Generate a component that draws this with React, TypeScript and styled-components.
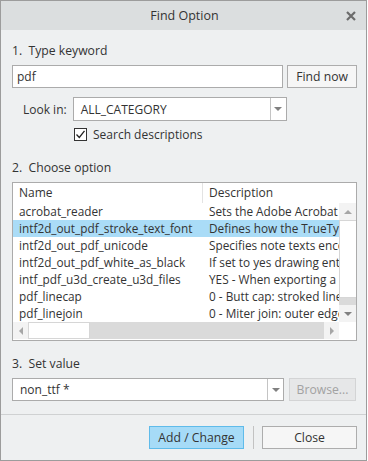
import { createGlobalStyle } from "styled-components";
import styled from "styled-components";

const GlobalStyle = createGlobalStyle`
  html, body {
    margin: 0;
    padding: 0;
    background: #ffffff;
  }
  body {
    font-family: "Open Sans", "Noto Sans", Arial, sans-serif;
    font-size: 11.8px;
    color: #333;
  }
`;

const options = [
  { name: "acrobat_reader", desc: "Sets the Adobe Acrobat Reader" },
  { name: "intf2d_out_pdf_stroke_text_font", desc: "Defines how the TrueType fonts" },
  { name: "intf2d_out_pdf_unicode", desc: "Specifies note texts encoding" },
  { name: "intf2d_out_pdf_white_as_black", desc: "If set to yes drawing entities" },
  { name: "intf_pdf_u3d_create_u3d_files", desc: "YES - When exporting a Creo" },
  { name: "pdf_linecap", desc: "0 - Butt cap: stroked lines" },
  { name: "pdf_linejoin", desc: "0 - Miter join: outer edges" },
];

export default function App() {
  return (
    <>
      <GlobalStyle />
      <Window>
        <TitleBar>
          <Title>Find Option</Title>
          <CloseIcon viewBox="0 0 10 10">
            <path d="M1 1 L9 9 M9 1 L1 9" stroke="#6b6b6b" strokeWidth="2.2" />
          </CloseIcon>
        </TitleBar>
        <Body>
          <StepLabel>1.&nbsp;&nbsp;Type keyword</StepLabel>
          <InputRow>
            <TextBox>pdf</TextBox>
            <Button width={70}>Find now</Button>
          </InputRow>
          <LookRow>
            <FieldLabel>Look in:</FieldLabel>
            <Combo width={214} height={24}>
              <ComboText>ALL_CATEGORY</ComboText>
              <ComboArrow>
                <Tri dir="down" />
              </ComboArrow>
            </Combo>
          </LookRow>
          <CheckRow>
            <CheckBox>
              <svg width="11" height="11" viewBox="0 0 11 11">
                <path d="M1.5 5.5 L4.3 8.5 L9.5 1.8" stroke="#222" strokeWidth="1.3" fill="none" />
              </svg>
            </CheckBox>
            <span>Search descriptions</span>
          </CheckRow>

          <StepLabel top={18}>2.&nbsp;&nbsp;Choose option</StepLabel>
          <ListBox>
            <HeaderRow>
              <HeaderCell>Name</HeaderCell>
              <HeaderCell divider>Description</HeaderCell>
            </HeaderRow>
            <ListMiddle>
              <Rows>
                {options.map((o, i) => (
                  <Row key={o.name} selected={i === 1}>
                    <NameCell>{o.name}</NameCell>
                    <DescCell>{o.desc}</DescCell>
                  </Row>
                ))}
              </Rows>
              <VScroll>
                <ArrowCell>
                  <Tri dir="up" />
                </ArrowCell>
                <VThumb />
                <VTrack />
                <ArrowCell>
                  <Tri dir="down" />
                </ArrowCell>
              </VScroll>
            </ListMiddle>
            <HScrollRow>
              <HScroll>
                <HArrowCell>
                  <Tri dir="left" />
                </HArrowCell>
                <HThumb />
                <HTrack />
                <HArrowCell>
                  <Tri dir="right" />
                </HArrowCell>
              </HScroll>
              <Corner />
            </HScrollRow>
          </ListBox>

          <StepLabel top={15}>3.&nbsp;&nbsp;Set value</StepLabel>
          <ValueRow>
            <Combo width={272} height={23}>
              <ComboText>non_ttf *</ComboText>
              <ComboArrow>
                <Tri dir="down" />
              </ComboArrow>
            </Combo>
            <Button width={67} disabled>
              Browse...
            </Button>
          </ValueRow>
        </Body>
        <Footer>
          <Button width={95} primary>
            Add / Change
          </Button>
          <FooterDivider />
          <Button width={95}>Close</Button>
        </Footer>
      </Window>
    </>
  );
}

const Window = styled.div`
  width: 367px;
  height: 461px;
  box-sizing: border-box;
  border: 1px solid #9c9c9c;
  background: #eef0f1;
  display: flex;
  flex-direction: column;
`;

const TitleBar = styled.div`
  height: 29px;
  flex: none;
  background: #dbdedf;
  display: flex;
  align-items: center;
  justify-content: center;
  position: relative;
`;

const Title = styled.div`
  font-size: 12.5px;
  color: #333;
  margin-left: 2px;
`;

const CloseIcon = styled.svg`
  position: absolute;
  right: 10px;
  top: 10px;
  width: 10px;
  height: 10px;
`;

const Body = styled.div`
  padding: 13px 9px 0 11px;
  display: flex;
  flex-direction: column;
  flex: 1;
`;

const StepLabel = styled.div<{ top?: number }>`
  height: 16px;
  line-height: 16px;
  font-size: 12.2px;
  margin-top: ${(p) => p.top ?? 0}px;
  margin-bottom: 6px;
`;

const InputRow = styled.div`
  display: flex;
  gap: 4px;
  height: 23px;
`;

const TextBox = styled.div`
  width: 272px;
  box-sizing: border-box;
  border: 1px solid #ababab;
  background: #fff;
  padding: 0 4px;
  line-height: 21px;
  font-size: 12px;
`;

const Button = styled.div<{ width: number; primary?: boolean; disabled?: boolean }>`
  width: ${(p) => p.width}px;
  height: 23px;
  box-sizing: border-box;
  display: flex;
  align-items: center;
  justify-content: center;
  border: 1px solid ${(p) => (p.primary ? "#5fbbea" : p.disabled ? "#d3d4d5" : "#adadad")};
  background: ${(p) => (p.primary ? "#a6dbf7" : p.disabled ? "#e6e7e8" : "#f6f6f6")};
  color: ${(p) => (p.disabled ? "#a2a2a2" : "#333")};
  font-size: 12.2px;
`;

const LookRow = styled.div`
  display: flex;
  align-items: center;
  margin-top: 9px;
  padding-left: 11px;
  gap: 6px;
`;

const FieldLabel = styled.span`
  font-size: 12px;
`;

const Combo = styled.div<{ width: number; height: number }>`
  width: ${(p) => p.width}px;
  height: ${(p) => p.height}px;
  box-sizing: border-box;
  border: 1px solid #ababab;
  background: #fff;
  display: flex;
`;

const ComboText = styled.div`
  flex: 1;
  padding: 0 7px;
  display: flex;
  align-items: center;
  font-size: 12px;
`;

const ComboArrow = styled.div`
  width: 15px;
  border-left: 1px solid #c4c4c4;
  display: flex;
  align-items: center;
  justify-content: center;
`;

const Tri = styled.span<{ dir: "up" | "down" | "left" | "right" }>`
  width: 0;
  height: 0;
  ${(p) =>
    p.dir === "down"
      ? "border-left: 4px solid transparent; border-right: 4px solid transparent; border-top: 4px solid #808080;"
      : p.dir === "up"
      ? "border-left: 4px solid transparent; border-right: 4px solid transparent; border-bottom: 4px solid #a6a6a6;"
      : p.dir === "left"
      ? "border-top: 4px solid transparent; border-bottom: 4px solid transparent; border-right: 4px solid #a6a6a6;"
      : "border-top: 4px solid transparent; border-bottom: 4px solid transparent; border-left: 4px solid #a6a6a6;"}
`;

const CheckRow = styled.div`
  display: flex;
  align-items: center;
  gap: 6px;
  margin-top: 5px;
  padding-left: 62px;
  height: 16px;
  font-size: 12px;
`;

const CheckBox = styled.div`
  width: 13px;
  height: 13px;
  box-sizing: border-box;
  border: 1px solid #333;
  background: #fff;
  display: flex;
  align-items: center;
  justify-content: center;
`;

const ListBox = styled.div`
  width: 345px;
  height: 159px;
  box-sizing: border-box;
  border: 1px solid #ababab;
  background: #fff;
  display: flex;
  flex-direction: column;
  overflow: hidden;
`;

const HeaderRow = styled.div`
  height: 20px;
  flex: none;
  display: grid;
  grid-template-columns: 189px 1fr;
`;

const HeaderCell = styled.div<{ divider?: boolean }>`
  padding-left: 6px;
  line-height: 20px;
  font-size: 12px;
  border-left: ${(p) => (p.divider ? "1px solid #e3e3e3" : "none")};
`;

const ListMiddle = styled.div`
  display: flex;
  height: 119px;
  flex: none;
`;

const Rows = styled.div`
  flex: 1;
  overflow: hidden;
`;

const Row = styled.div<{ selected?: boolean }>`
  display: grid;
  grid-template-columns: 189px 1fr;
  height: 17px;
  line-height: 17px;
  background: ${(p) => (p.selected ? "#aadcf7" : "transparent")};
  white-space: nowrap;
  font-size: 11.8px;
`;

const NameCell = styled.div`
  padding-left: 6px;
  overflow: hidden;
`;

const DescCell = styled.div`
  padding-left: 7px;
  overflow: hidden;
`;

const VScroll = styled.div`
  width: 17px;
  display: flex;
  flex-direction: column;
`;

const ArrowCell = styled.div`
  height: 17px;
  flex: none;
  display: flex;
  align-items: center;
  justify-content: center;
  background: #f3f3f3;
`;

const VThumb = styled.div`
  height: 78px;
  flex: none;
  box-sizing: border-box;
  border: 1px solid #d6d6d6;
  border-right: none;
  background: #fff;
`;

const VTrack = styled.div`
  flex: 1;
  background: #dadada;
`;

const HScrollRow = styled.div`
  display: flex;
  height: 17px;
  flex: none;
`;

const HScroll = styled.div`
  flex: 1;
  display: flex;
`;

const HArrowCell = styled.div`
  width: 15px;
  flex: none;
  display: flex;
  align-items: center;
  justify-content: center;
  background: #f3f3f3;
`;

const HThumb = styled.div`
  width: 62px;
  flex: none;
  box-sizing: border-box;
  border: 1px solid #d6d6d6;
  background: #fff;
`;

const HTrack = styled.div`
  flex: 1;
  background: #dadada;
`;

const Corner = styled.div`
  width: 17px;
  background: #fff;
`;

const ValueRow = styled.div`
  display: flex;
  gap: 5px;
  height: 23px;
`;

const Footer = styled.div`
  flex: none;
  height: 46px;
  border-top: 1px solid #cfd1d2;
  display: flex;
  align-items: flex-start;
  justify-content: flex-end;
  padding: 11px 9px 0 0;
  box-sizing: border-box;
`;

const FooterDivider = styled.div`
  width: 1px;
  height: 23px;
  background: #c2c2c2;
  margin: 0 8px 0 9px;
`;
